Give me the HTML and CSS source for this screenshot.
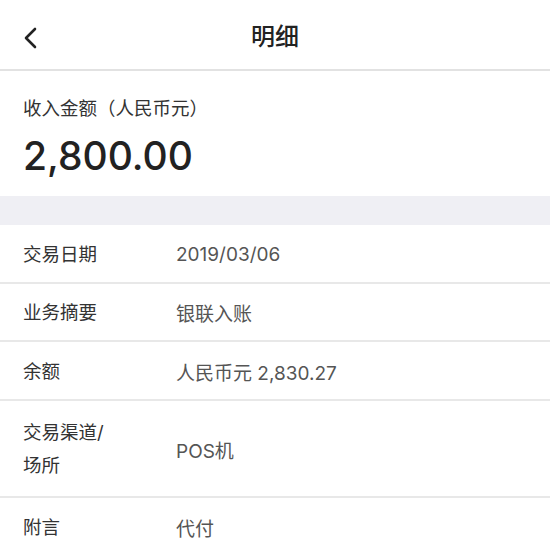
FILE: index.html
```html
<!DOCTYPE html>
<html lang="zh-CN">
  <head>
    <meta charset="UTF-8" />
    <meta name="viewport" content="width=device-width, initial-scale=1.0" />
    <title>明细</title>
    <link rel="stylesheet" href="styles.css">
  </head>
  <body>
    <div class="page">
      <div class="nav">
        <span class="back">
          <svg width="14" height="22" viewBox="0 0 14 22">
            <path d="M12 2 L3 11 L12 20" fill="none" stroke="#222" stroke-width="2.6" stroke-linecap="round" stroke-linejoin="round" />
          </svg>
        </span>
        <h1 class="title">明细</h1>
      </div>

      <div class="summary">
        <div class="summary-label">收入金额（人民币元）</div>
        <div class="summary-amount">2,800.00</div>
      </div>

      <div class="spacer"></div>

      <div class="detail-list">
        <div class="detail-row">
          <span class="detail-label">交易日期</span>
          <span class="detail-value">2019/03/06</span>
        </div>
        <div class="detail-row">
          <span class="detail-label">业务摘要</span>
          <span class="detail-value">银联入账</span>
        </div>
        <div class="detail-row">
          <span class="detail-label">余额</span>
          <span class="detail-value">人民币元 2,830.27</span>
        </div>
        <div class="detail-row tall">
          <span class="detail-label">交易渠道/<br>场所</span>
          <span class="detail-value">POS机</span>
        </div>
        <div class="detail-row">
          <span class="detail-label">附言</span>
          <span class="detail-value">代付</span>
        </div>
      </div>
    </div>
  </body>
</html>
```

FILE: styles.css
```css
body {
  margin: 0;
  padding: 0;
  background: #fff;
  font-family: "Inter", "Noto Sans CJK SC", sans-serif;
  color: #333;
}

.page {
  width: 550px;
  overflow: hidden;
}

.nav {
  height: 69px;
  display: flex;
  align-items: center;
  justify-content: center;
  position: relative;
  border-bottom: 2px solid #e2e2e2;
}

.back {
  position: absolute;
  left: 23px;
  top: 27px;
  display: flex;
}

.title {
  margin: 0;
  font-family: "Noto Sans CJK SC", sans-serif;
  font-size: 24px;
  font-weight: 500;
  color: #222;
}

.summary {
  padding: 24px 23px 16px;
}

.summary-label {
  font-size: 18.5px;
  line-height: 26px;
  color: #333;
}

.summary-amount {
  margin-top: 11px;
  font-size: 39px;
  font-weight: 500;
  line-height: 48px;
  color: #222;
}

.spacer {
  height: 29px;
  background: #efeff4;
}

.detail-row {
  display: flex;
  align-items: center;
  box-sizing: border-box;
  min-height: 58.5px;
  padding: 2px 0 0 23px;
  border-bottom: 2px solid #e8e8e8;
  font-size: 18.5px;
}

.detail-row.tall {
  min-height: 97px;
}

.detail-row:last-child {
  border-bottom: none;
}

.detail-label {
  width: 153px;
  flex-shrink: 0;
  line-height: 33px;
  color: #333;
}

.detail-value {
  color: #555;
  font-size: 19px;
}
```
